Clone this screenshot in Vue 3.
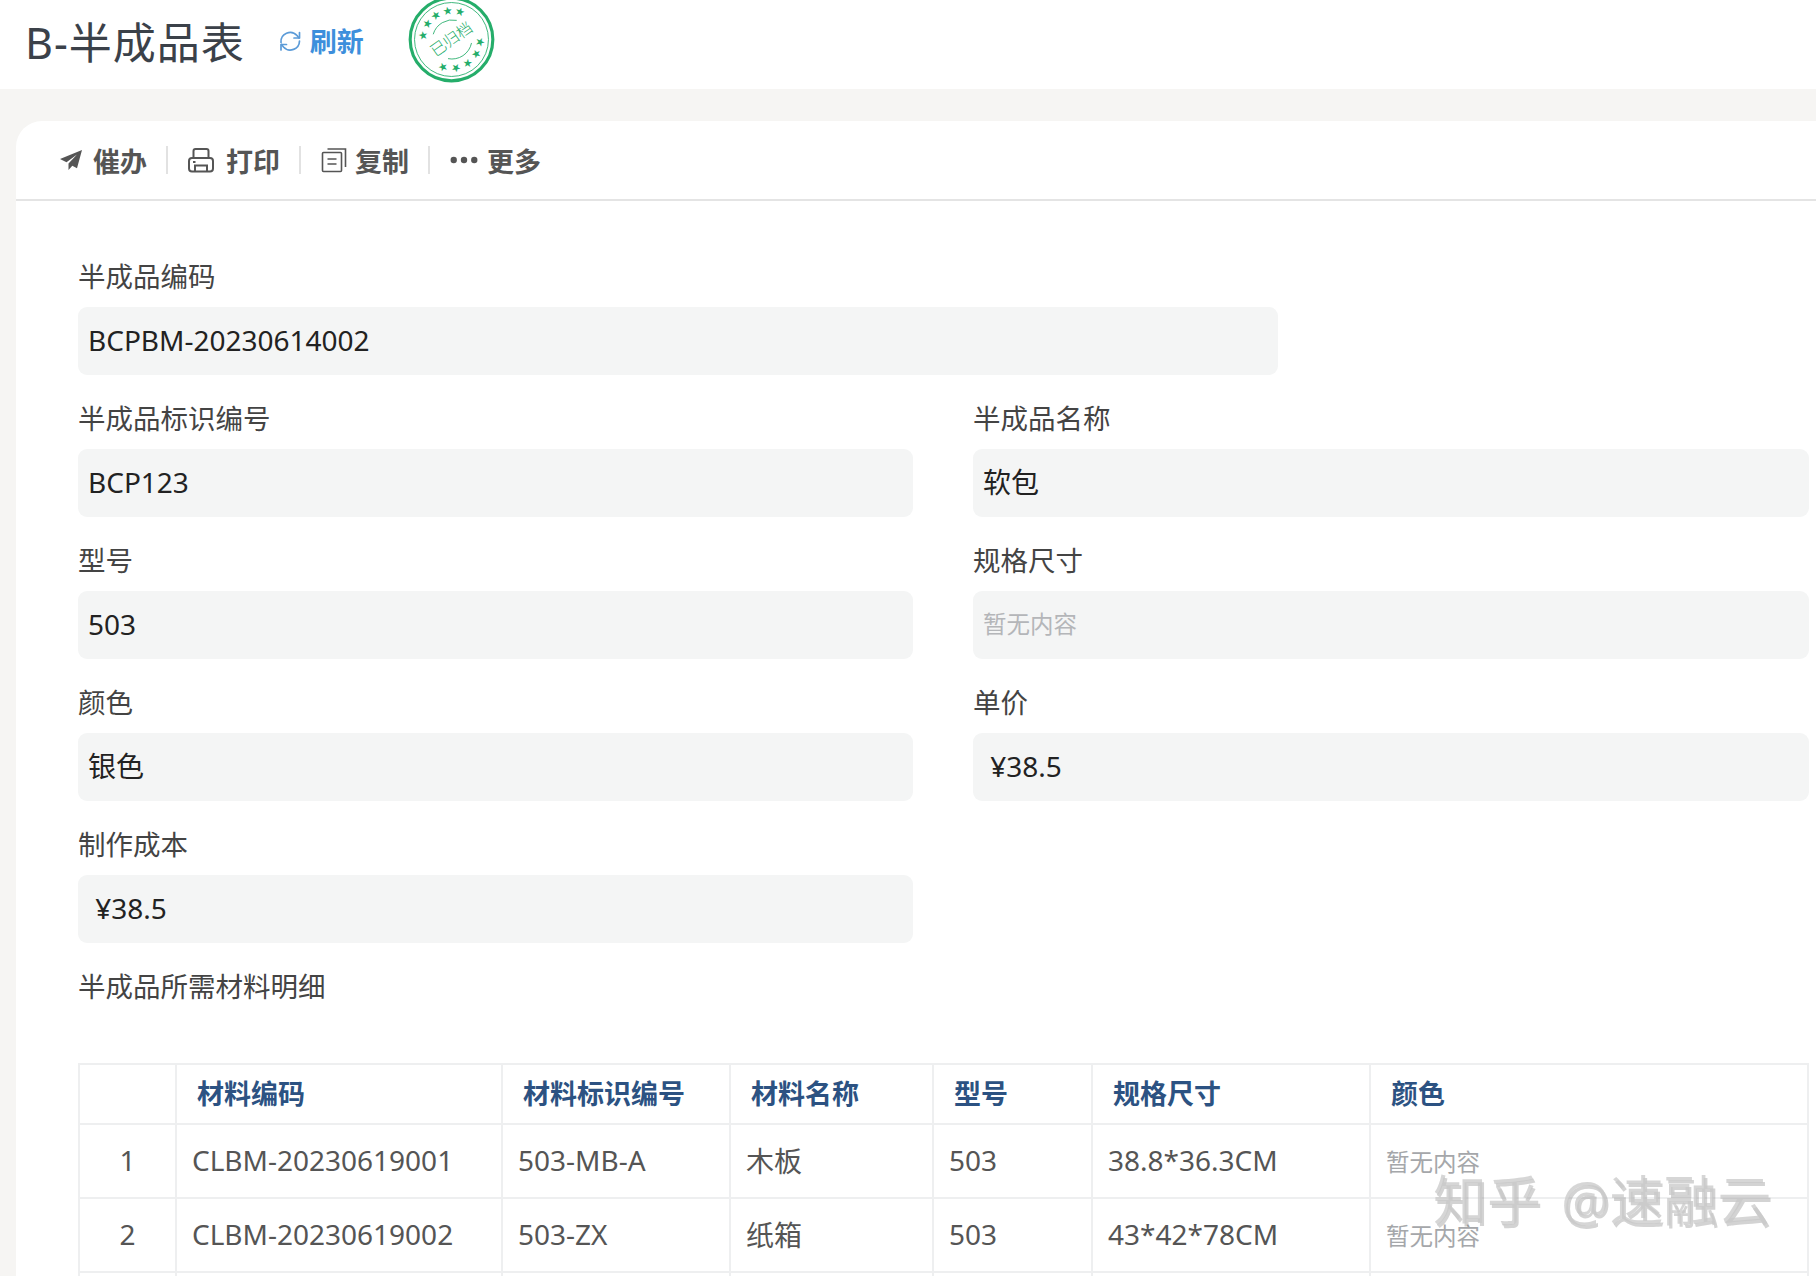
<script setup>
const leftRight = [
  [
    { label: '半成品标识编号', value: 'BCP123' },
    { label: '半成品名称', value: '软包' },
  ],
  [
    { label: '型号', value: '503' },
    { label: '规格尺寸', value: '', empty: true },
  ],
  [
    { label: '颜色', value: '银色' },
    { label: '单价', value: '\u00a0¥38.5' },
  ],
  [{ label: '制作成本', value: '\u00a0¥38.5' }],
];

const columns = ['', '材料编码', '材料标识编号', '材料名称', '型号', '规格尺寸', '颜色'];
const rows = [
  ['1', 'CLBM-20230619001', '503-MB-A', '木板', '503', '38.8*36.3CM', null],
  ['2', 'CLBM-20230619002', '503-ZX', '纸箱', '503', '43*42*78CM', null],
  ['', '', '', '', '', '', ''],
];

const starAngles = [-172, -147, -123, -98, -73, 5, 30, 56, 81, 107];
</script>

<template>
  <div class="page">
    <header class="top">
      <h1 class="title">B-半成品表</h1>
      <a class="refresh">
        <svg class="refresh-icon" viewBox="0 0 24 24" fill="none" stroke="#5b9bd8" stroke-width="1.700" stroke-linecap="round" stroke-linejoin="round">
          <path d="M3 13.500a9.200 9.200 0 0 1 16-7l2 2.500" />
          <path d="M21.500 3.500V9h-5.500" />
          <path d="M21.500 12a9.200 9.200 0 0 1-16 6L3.500 15.500" />
          <path d="M3 21v-5.500h5.500" />
        </svg>
        <span>刷新</span>
      </a>
      <svg class="stamp" viewBox="0 0 100 100">
        <circle cx="50" cy="50" r="47.500" fill="#fff" stroke="#25ad6a" stroke-width="3.600" />
        <circle cx="50" cy="50" r="42.500" fill="none" stroke="#25ad6a" stroke-width="1" />
        <path d="M29 44a23 23 0 0 1 27-16" fill="none" stroke="#25ad6a" stroke-width="1" />
        <path d="M73 54a23 23 0 0 1-27 18" fill="none" stroke="#25ad6a" stroke-width="1" />
        <text
          v-for="a in starAngles"
          :key="a"
          class="stamp-star"
          text-anchor="middle"
          y="3.500"
          :transform="`rotate(${a} 50 50) translate(83 50) rotate(90)`"
        >★</text>
        <text class="stamp-text" x="50" y="56" text-anchor="middle" transform="rotate(-35 50 50)">已归档</text>
      </svg>
    </header>

    <main class="card">
      <div class="toolbar">
        <span class="tool">
          <svg class="tool-icon send" viewBox="0 0 24 24" fill="#555"><path d="M23 2 1 11l6.500 3.200L18 6.500 9.500 15.500V22l3.800-4.200 4.700 2.400z" /></svg>
          催办
        </span>
        <i class="sep"></i>
        <span class="tool print">
          <svg class="tool-icon" viewBox="0 0 28 28" fill="none" stroke="#555" stroke-width="2">
            <path d="M6.500 12V5a2 2 0 0 1 2-2h11a2 2 0 0 1 2 2v7" />
            <rect x="2" y="12" width="24" height="13.500" rx="3" />
            <path d="M8 25.500V19.500h12v6" />
            <path d="M6 16h2.500" />
          </svg>
          打印
        </span>
        <i class="sep"></i>
        <span class="tool copy">
          <svg class="tool-icon" viewBox="0 0 28 28" fill="none" stroke="#555" stroke-width="1.600">
            <rect x="2.500" y="6.500" width="19" height="19" rx="1" />
            <path d="M7.500 3h18v18" />
            <path d="M7.500 13h9M7.500 18h9" />
          </svg>
          复制
        </span>
        <i class="sep"></i>
        <span class="tool more">
          <svg class="tool-icon dots" viewBox="0 0 30 8" fill="#555">
            <circle cx="4" cy="4" r="3.400" />
            <circle cx="15" cy="4" r="3.400" />
            <circle cx="26" cy="4" r="3.400" />
          </svg>
          更多
        </span>
      </div>

      <div class="form">
        <div class="field wide">
          <label>半成品编码</label>
          <div class="box">BCPBM-20230614002</div>
        </div>
        <div v-for="(row, i) in leftRight" :key="i" class="form-row">
          <div v-for="f in row" :key="f.label" class="field">
            <label>{{ f.label }}</label>
            <div class="box" :class="{ empty: f.empty }">{{ f.empty ? '暂无内容' : f.value }}</div>
          </div>
        </div>

        <div class="section-title">半成品所需材料明细</div>

        <table class="detail">
          <colgroup>
            <col class="c0" /><col class="c1" /><col class="c2" /><col class="c3" /><col class="c4" /><col class="c5" /><col />
          </colgroup>
          <thead>
            <tr>
              <th v-for="c in columns" :key="c">{{ c }}</th>
            </tr>
          </thead>
          <tbody>
            <tr v-for="(r, n) in rows" :key="n">
              <td v-for="(v, idx) in r" :key="idx" :class="{ index: idx === 0 }">
                <span v-if="v === null" class="none">暂无内容</span>
                <template v-else>{{ v }}</template>
              </td>
            </tr>
          </tbody>
        </table>
      </div>
    </main>

    <div class="watermark">知乎 @速融云</div>
  </div>
</template>

<style>
html,
body {
  margin: 0;
  height: 1276px;
  overflow: hidden;
  background: #f6f5f3;
}
</style>

<style scoped>
.page {
  position: relative;
  height: 1276px;
  overflow: hidden;
  background: #f6f5f3;
  font-family: "Noto Sans", "Noto Sans CJK SC", sans-serif;
  color: #333;
}

.top {
  box-sizing: border-box;
  display: flex;
  align-items: center;
  height: 89px;
  padding: 0 0 8px 25px;
  background: #fff;
}

.title {
  margin: 0;
  font-size: 43px;
  font-weight: 400;
  letter-spacing: 1px;
  color: #3b4149;
}

.refresh {
  display: flex;
  align-items: center;
  gap: 8px;
  margin-left: 33px;
  font-size: 27px;
  font-weight: 700;
  color: #3d8fdc;
}

.refresh-icon {
  width: 24px;
  height: 24px;
}

.stamp {
  align-self: flex-start;
  width: 87px;
  height: 87px;
  margin-top: -4px;
  margin-left: 44px;
}

.stamp-star {
  font-size: 10.500px;
  fill: #25ad6a;
}

.stamp-text {
  font-size: 18px;
  fill: #25ad6a;
  font-weight: 300;
}

.card {
  height: 1200px;
  margin: 32px 0 0 16px;
  border-top-left-radius: 26px;
  background: #fff;
}

.toolbar {
  display: flex;
  align-items: center;
  height: 78px;
  padding-left: 43px;
  border-bottom: 2px solid #e4e4e4;
  font-size: 27px;
  font-weight: 700;
  color: #555;
}

.tool {
  display: flex;
  align-items: center;
  gap: 10px;
}

.print {
  gap: 11px;
}

.copy {
  gap: 7px;
}

.more {
  gap: 9px;
  margin-left: 1px;
}

.tool-icon {
  width: 28px;
  height: 28px;
}

.send {
  width: 24px;
  height: 24px;
}

.dots {
  height: 8px;
}

.sep {
  width: 2px;
  height: 28px;
  margin: 0 19px;
  background: #e2e2e2;
}

.form {
  padding: 56px 7px 0 62px;
}

.form-row {
  display: grid;
  grid-template-columns: 835px 836px;
  column-gap: 60px;
}

.field {
  height: 142px;
}

.wide {
  width: 1200px;
}

.field label {
  display: block;
  height: 39px;
  font-size: 27.500px;
  line-height: 39px;
  color: #444;
}

.box {
  box-sizing: border-box;
  height: 68px;
  margin-top: 11px;
  padding-left: 10px;
  border-radius: 9px;
  background: #f4f5f5;
  font-size: 28px;
  line-height: 67px;
  color: #222;
}

.empty {
  font-size: 23.500px;
  color: #b4b6b9;
}

.section-title {
  height: 96px;
  font-size: 27.500px;
  line-height: 39px;
  color: #444;
}

.detail {
  width: 1731px;
  table-layout: fixed;
  border-collapse: collapse;
  font-size: 28px;
  color: #555;
}

.c0 { width: 97px; }
.c1 { width: 326px; }
.c2 { width: 228px; }
.c3 { width: 203px; }
.c4 { width: 159px; }
.c5 { width: 278px; }

.detail th,
.detail td {
  border: 2px solid #eeeff0;
  text-align: left;
  white-space: nowrap;
}

.detail th {
  box-sizing: border-box;
  height: 60px;
  padding: 0 0 4px 20px;
  font-size: 27px;
  font-weight: 700;
  color: #2c5282;
}

.detail td {
  box-sizing: border-box;
  height: 74px;
  padding: 0 0 2px 15px;
}

.detail td.index {
  padding: 0 0 2px;
  text-align: center;
}

.none {
  font-size: 23.500px;
  color: #a5a7aa;
}

.watermark {
  position: absolute;
  left: 1433px;
  top: 1164px;
  font-size: 54px;
  line-height: 72px;
  word-spacing: 6px;
  white-space: nowrap;
  color: rgba(200, 200, 200, 0.75);
  text-shadow: 2px 3px 0 rgba(130, 130, 130, 0.35);
}
</style>
